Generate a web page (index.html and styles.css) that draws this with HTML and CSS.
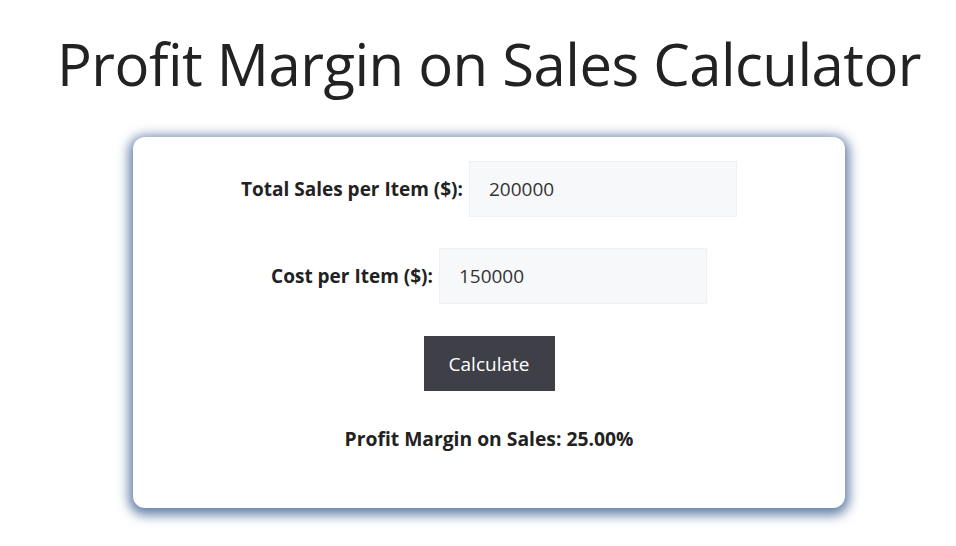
FILE: index.html
```html
<!DOCTYPE html>
<html>
<head>
<meta charset="utf-8">
<link rel="stylesheet" href="styles.css">
</head>
<body>
<div class="page">
  <h1 class="title">Profit Margin on Sales Calculator</h1>
  <div class="card">
    <div class="row">
      <label class="label">Total Sales per Item ($):</label>
      <div class="input">200000</div>
    </div>
    <div class="row">
      <label class="label">Cost per Item ($):</label>
      <div class="input">150000</div>
    </div>
    <div class="row row-btn">
      <button class="btn">Calculate</button>
    </div>
    <div class="result">Profit Margin on Sales: 25.00%</div>
  </div>
</div>
</body>
</html>
```
FILE: styles.css
```css
html, body {
  margin: 0;
  padding: 0;
  background: #ffffff;
}
body {
  font-family: "Open Sans", "Noto Sans", sans-serif;
  color: #212529;
}
.page {
  padding: 0 0 38px 22px;
  display: flex;
  flex-direction: column;
  align-items: center;
}
.title {
  margin: 0;
  padding-top: 29px;
  height: 115px;
  box-sizing: border-box;
  font-size: 58px;
  font-weight: 400;
  line-height: 1.2;
  color: #222222;
  letter-spacing: -0.5px;
  white-space: nowrap;
}
.card {
  width: 712px;
  height: 371px;
  box-sizing: border-box;
  margin-top: 22px;
  background: #fff;
  border-radius: 12px;
  box-shadow: 0 3px 12px 4px rgba(70, 105, 150, 0.85);
  padding-top: 24px;
  display: flex;
  flex-direction: column;
  align-items: center;
}
.row {
  display: flex;
  align-items: center;
  gap: 6px;
  margin-bottom: 31px;
}
.label {
  font-size: 19px;
  font-weight: 700;
  color: #222;
}
.input {
  width: 268px;
  height: 56px;
  box-sizing: border-box;
  background: #f7f8fa;
  border: 1px solid #eef0f3;
  padding-left: 19px;
  display: flex;
  align-items: center;
  font-size: 19px;
  color: #333;
}
.btn {
  width: 131px;
  height: 55px;
  border: none;
  background: #3e3f47;
  color: #fff;
  font-family: inherit;
  font-size: 19px;
  margin-top: 1px;
}
.row-btn {
  margin-bottom: 34px;
}
.result {
  font-size: 19.3px;
  font-weight: 700;
  color: #222;
}
```
